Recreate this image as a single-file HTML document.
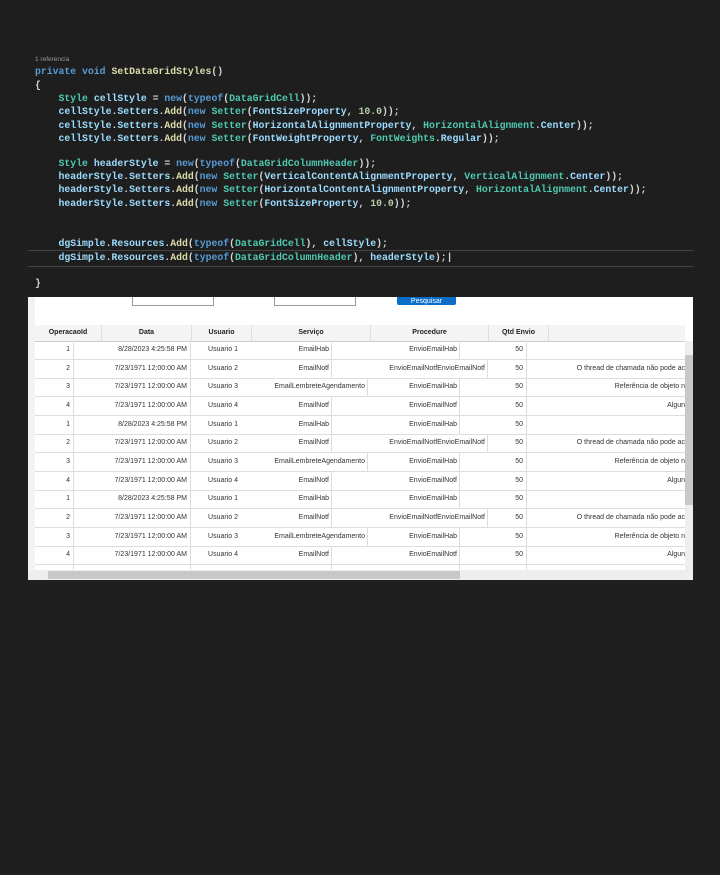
<!DOCTYPE html>
<html><head><meta charset="utf-8"><style>
body{margin:0;width:720px;height:875px;background:#1f1f1f;position:relative;overflow:hidden;font-family:"Liberation Sans",sans-serif}
.code{position:absolute;left:28px;top:50px;width:665px;height:247px;background:#1e1e1e}
.ln{position:absolute;left:35px;font-family:"Liberation Mono",monospace;font-size:9.8px;font-weight:bold;color:#d4d4d4;white-space:pre;letter-spacing:0}
.k{color:#569cd6}.t{color:#4ec9b0}.v{color:#9cdcfe}.m{color:#dcdcaa}.n{color:#b5cea8}
.panel{position:absolute;left:28px;top:297px;width:665px;height:283px;background:#fff}
.cell{position:absolute;font-size:7px;color:#333;white-space:nowrap;text-align:right}
.hd{position:absolute;top:325px;height:16px;background:#f4f4f4;border-right:1px solid #ddd;font-size:7px;font-weight:bold;color:#222;text-align:center;line-height:16px}
.row{position:absolute;left:0;width:650px;height:1px;background:#ddd}
.vl{position:absolute;width:1px;background:#ddd}
#rows{position:absolute;left:35px;top:341px;width:650px;height:229px;overflow:hidden}
</style></head><body>
<div class="code"></div>
<div class="ln" style="top:56px;font-size:6.5px;color:#999;font-weight:normal;font-family:'Liberation Sans',sans-serif">1 referencia</div>
<div class="ln" style="top:66px"><span class="k">private void</span> <span class="m">SetDataGridStyles</span>()</div>
<div class="ln" style="top:80px">{</div>
<div class="ln" style="top:93px">    <span class="t">Style</span> <span class="v">cellStyle</span> = <span class="k">new</span>(<span class="k">typeof</span>(<span class="t">DataGridCell</span>));</div>
<div class="ln" style="top:106px">    <span class="v">cellStyle</span>.<span class="v">Setters</span>.<span class="m">Add</span>(<span class="k">new</span> <span class="t">Setter</span>(<span class="v">FontSizeProperty</span>, <span class="n">10.0</span>));</div>
<div class="ln" style="top:120px">    <span class="v">cellStyle</span>.<span class="v">Setters</span>.<span class="m">Add</span>(<span class="k">new</span> <span class="t">Setter</span>(<span class="v">HorizontalAlignmentProperty</span>, <span class="t">HorizontalAlignment</span>.<span class="v">Center</span>));</div>
<div class="ln" style="top:133px">    <span class="v">cellStyle</span>.<span class="v">Setters</span>.<span class="m">Add</span>(<span class="k">new</span> <span class="t">Setter</span>(<span class="v">FontWeightProperty</span>, <span class="t">FontWeights</span>.<span class="v">Regular</span>));</div>
<div class="ln" style="top:158px">    <span class="t">Style</span> <span class="v">headerStyle</span> = <span class="k">new</span>(<span class="k">typeof</span>(<span class="t">DataGridColumnHeader</span>));</div>
<div class="ln" style="top:171px">    <span class="v">headerStyle</span>.<span class="v">Setters</span>.<span class="m">Add</span>(<span class="k">new</span> <span class="t">Setter</span>(<span class="v">VerticalContentAlignmentProperty</span>, <span class="t">VerticalAlignment</span>.<span class="v">Center</span>));</div>
<div class="ln" style="top:184px">    <span class="v">headerStyle</span>.<span class="v">Setters</span>.<span class="m">Add</span>(<span class="k">new</span> <span class="t">Setter</span>(<span class="v">HorizontalContentAlignmentProperty</span>, <span class="t">HorizontalAlignment</span>.<span class="v">Center</span>));</div>
<div class="ln" style="top:198px">    <span class="v">headerStyle</span>.<span class="v">Setters</span>.<span class="m">Add</span>(<span class="k">new</span> <span class="t">Setter</span>(<span class="v">FontSizeProperty</span>, <span class="n">10.0</span>));</div>
<div class="ln" style="top:238px">    <span class="v">dgSimple</span>.<span class="v">Resources</span>.<span class="m">Add</span>(<span class="k">typeof</span>(<span class="t">DataGridCell</span>), <span class="v">cellStyle</span>);</div>
<div style="position:absolute;left:28px;top:250px;width:665px;height:15px;border-top:1px solid #444;border-bottom:1px solid #444"></div>
<div class="ln" style="top:252px">    <span class="v">dgSimple</span>.<span class="v">Resources</span>.<span class="m">Add</span>(<span class="k">typeof</span>(<span class="t">DataGridColumnHeader</span>), <span class="v">headerStyle</span>);|</div>
<div class="ln" style="top:278px">}</div>
<div class="panel"></div>
<div style="position:absolute;left:28px;top:297px;width:665px;height:10px;overflow:hidden">
 <div style="position:absolute;left:104px;top:-8px;width:80px;height:15px;border:1px solid #999;background:#fff"></div>
 <div style="position:absolute;left:246px;top:-8px;width:80px;height:15px;border:1px solid #999;background:#fff"></div>
 <div style="position:absolute;left:369px;top:-8px;width:59px;height:16px;background:#0a6ec9;border-radius:2px;color:#fff;font-size:7px;text-align:center;line-height:26px">Pesquisar</div>
</div>
<div class="hd" style="left:35px;width:66px">OperacaoId</div>
<div class="hd" style="left:102px;width:89px">Data</div>
<div class="hd" style="left:192px;width:59px">Usuario</div>
<div class="hd" style="left:252px;width:118px">Serviço</div>
<div class="hd" style="left:371px;width:117px">Procedure</div>
<div class="hd" style="left:489px;width:59px">Qtd Envio</div>
<div class="hd" style="left:549px;width:136px;border:0"></div>
<div style="position:absolute;left:35px;top:341px;width:650px;height:1px;background:#ccc"></div>
<div id="rows"></div>
<div style="position:absolute;left:685px;top:341px;width:8px;height:229px;background:#eee"></div>
<div style="position:absolute;left:685px;top:355px;width:8px;height:150px;background:#c8c8c8"></div>
<div style="position:absolute;left:28px;top:570px;width:665px;height:10px;background:#eee"></div>
<div style="position:absolute;left:48px;top:571px;width:412px;height:8px;background:#c8c8c8"></div>
<div style="position:absolute;left:28px;top:297px;width:7px;height:273px;background:#f3f3f3"></div>
<script>
var data=[["1","8/28/2023 4:25:58 PM","Usuario 1","EmailHab","EnvioEmailHab","50",""],
["2","7/23/1971 12:00:00 AM","Usuario 2","EmailNotf","EnvioEmailNotfEnvioEmailNotf","50","O thread de chamada não pode ac"],
["3","7/23/1971 12:00:00 AM","Usuario 3","EmailLembreteAgendamento","EnvioEmailHab","50","Referência de objeto n"],
["4","7/23/1971 12:00:00 AM","Usuario 4","EmailNotf","EnvioEmailNotf","50","Algun"]];
var h="";
for(var i=0;i<13;i++){var k=i%4,d=data[k];var y=i*18.65;
 var sR=(k==2)?365:329, pR=(k==1)?485:457;
 var right=[70,187,238,sR,pR,523,685];
 for(var j=0;j<7;j++){if(!d[j])continue;h+='<div class="cell" style="right:'+(685-right[j])+'px;top:'+(y+5)+'px">'+d[j]+'</div>';}
 h+='<div class="row" style="top:'+(y+18)+'px"></div>';
 [73,190,sR+2,pR+2,526].forEach(function(x){h+='<div class="vl" style="left:'+(x-35)+'px;top:'+y+'px;height:18px"></div>'});}
document.getElementById("rows").innerHTML=h;
</script>
</body></html>
